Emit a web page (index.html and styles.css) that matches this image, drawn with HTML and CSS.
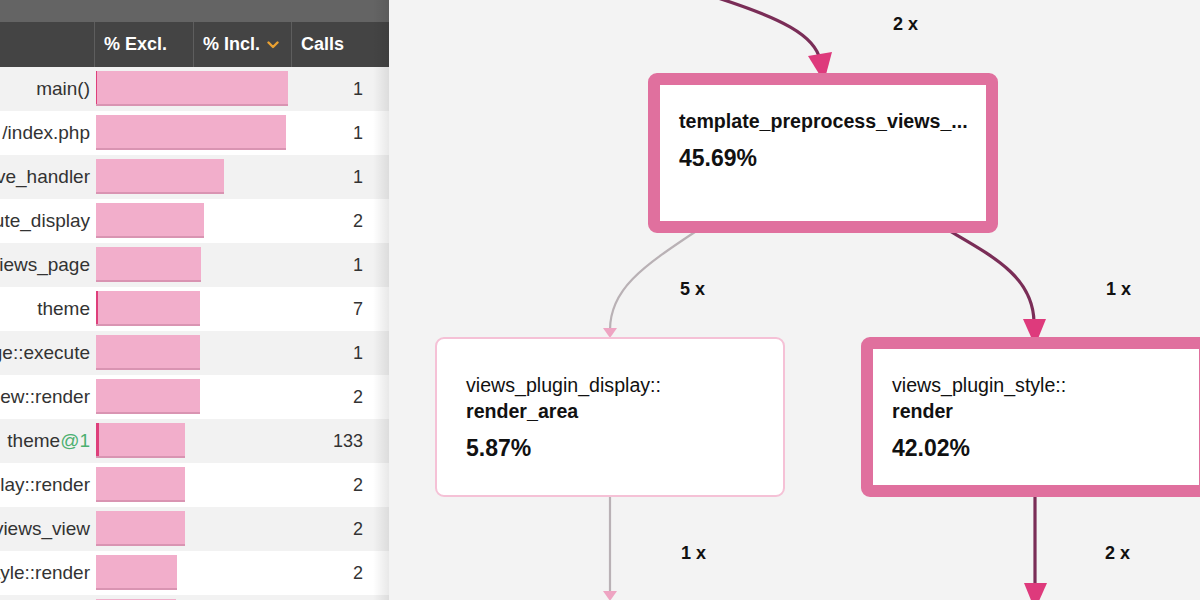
FILE: index.html
```html
<!DOCTYPE html>
<html>
<head>
<meta charset="utf-8">
<link rel="stylesheet" href="styles.css">
</head>
<body>
<div class="app">
  <aside class="panel">
    <div class="topbar"></div>
    <div class="thead">
      <div class="th th-name"></div>
      <div class="th">% Excl.</div>
      <div class="th">% Incl.
        <svg class="chev" width="12" height="8" viewBox="0 0 12 8"><polyline points="1.5,1.5 6,6 10.5,1.5" fill="none" stroke="#e9a132" stroke-width="2.4" stroke-linecap="round" stroke-linejoin="round"/></svg>
      </div>
      <div class="th">Calls</div>
    </div>
    <div class="rows">
      <div class="row"><div class="name"><span>main()</span></div><div class="barcell"><div class="bar" style="width:192px"><div class="excl" style="width:1px"></div></div></div><div class="calls">1</div></div>
      <div class="row"><div class="name"><span>/index.php</span></div><div class="barcell"><div class="bar" style="width:190px"></div></div><div class="calls">1</div></div>
      <div class="row"><div class="name"><span>menu_execute_active_handler</span></div><div class="barcell"><div class="bar" style="width:128px"></div></div><div class="calls">1</div></div>
      <div class="row"><div class="name"><span>views_plugin_display_page::execute_display</span></div><div class="barcell"><div class="bar" style="width:108px"></div></div><div class="calls">2</div></div>
      <div class="row"><div class="name"><span>views_page</span></div><div class="barcell"><div class="bar" style="width:105px"></div></div><div class="calls">1</div></div>
      <div class="row"><div class="name"><span>theme</span></div><div class="barcell"><div class="bar" style="width:104px"><div class="excl" style="width:1.5px"></div></div></div><div class="calls">7</div></div>
      <div class="row"><div class="name"><span>views_plugin_display_page::execute</span></div><div class="barcell"><div class="bar" style="width:104px"></div></div><div class="calls">1</div></div>
      <div class="row"><div class="name"><span>views_view::render</span></div><div class="barcell"><div class="bar" style="width:104px"></div></div><div class="calls">2</div></div>
      <div class="row"><div class="name"><span>theme<em class="rec">@1</em></span></div><div class="barcell"><div class="bar" style="width:89px"><div class="excl" style="width:3px"></div></div></div><div class="calls">133</div></div>
      <div class="row"><div class="name"><span>views_plugin_display::render</span></div><div class="barcell"><div class="bar" style="width:89px"></div></div><div class="calls">2</div></div>
      <div class="row"><div class="name"><span>template_preprocess_views_view</span></div><div class="barcell"><div class="bar" style="width:89px"></div></div><div class="calls">2</div></div>
      <div class="row"><div class="name"><span>views_plugin_style::render</span></div><div class="barcell"><div class="bar" style="width:81px"></div></div><div class="calls">2</div></div>
      <div class="row"><div class="name"><span>views_plugin_style_default::render</span></div><div class="barcell"><div class="bar" style="width:80px"></div></div><div class="calls">2</div></div>
    </div>
  </aside>

  <main class="graph">
    <svg class="edges" width="811" height="600" viewBox="389 0 811 600">
      <path d="M 718 -2 C 780 18, 815 35, 820 60" fill="none" stroke="#7a2d57" stroke-width="3.2"/>
      <polygon points="808,56 832,52 824,82" fill="#de3a7c"/>

      <path d="M 701 228 C 640 268, 610 290, 610 330" fill="none" stroke="#b9b1b5" stroke-width="2.2"/>
      <polygon points="603,328 617,328 610,338" fill="#eea4c2"/>

      <path d="M 943 227 C 990 255, 1033 275, 1034 322" fill="none" stroke="#7a2d57" stroke-width="3.2"/>
      <polygon points="1023,319 1046,319 1035,346" fill="#de3a7c"/>

      <path d="M 610 497 L 610 594" fill="none" stroke="#b9b1b5" stroke-width="2.2"/>
      <polygon points="603,591 617,591 610,601" fill="#eea4c2"/>

      <path d="M 1035 497 L 1035 588" fill="none" stroke="#7a2d57" stroke-width="3.2"/>
      <polygon points="1024,583 1047,583 1035,610" fill="#de3a7c"/>

      <text class="lbl" x="893" y="30">2 x</text>
      <text class="lbl" x="680" y="295">5 x</text>
      <text class="lbl" x="1106" y="295">1 x</text>
      <text class="lbl" x="681" y="559">1 x</text>
      <text class="lbl" x="1105" y="559">2 x</text>
    </svg>

    <div class="node hot n1">
      <div class="fn"><b>template_preprocess_views_...</b></div>
      <div class="pct">45.69%</div>
    </div>
    <div class="node cold n2">
      <div class="fn">views_plugin_display::<br><b>render_area</b></div>
      <div class="pct">5.87%</div>
    </div>
    <div class="node hot n3">
      <div class="fn">views_plugin_style::<br><b>render</b></div>
      <div class="pct">42.02%</div>
    </div>
  </main>
</div>
</body>
</html>
```

FILE: styles.css
```css
* { box-sizing: border-box; }
html, body { margin: 0; padding: 0; }
body {
  width: 1200px;
  height: 600px;
  overflow: hidden;
  font-family: "Liberation Sans", Arial, Helvetica, sans-serif;
  background: #f3f3f3;
}
.app {
  display: flex;
  width: 1200px;
  height: 600px;
}
.panel {
  position: relative;
  width: 389px;
  flex: none;
  display: flex;
  flex-direction: column;
  background: #f2f2f2;
  overflow: hidden;
}
.panel::after {
  content: "";
  position: absolute;
  top: 0;
  right: 0;
  bottom: 0;
  width: 16px;
  background: linear-gradient(to right, rgba(0,0,0,0), rgba(0,0,0,0.09));
  pointer-events: none;
}
.topbar {
  height: 22px;
  background: #646464;
  flex: none;
}
.thead {
  height: 45px;
  flex: none;
  display: grid;
  grid-template-columns: 94px 99px 98px 98px;
  background: #444444;
}
.th {
  display: flex;
  align-items: center;
  gap: 7px;
  padding-left: 9px;
  color: #ffffff;
  font-weight: bold;
  font-size: 18px;
  border-left: 1px solid #5e5e5e;
}
.th-name { border-left: none; }
.chev { display: block; margin-top: 1px; }

.rows { display: flex; flex-direction: column; }
.row {
  height: 44px;
  flex: none;
  display: grid;
  grid-template-columns: 94px 197px 98px;
  background: #f2f2f2;
  color: #333;
  font-size: 19px;
}
.row:nth-child(even) { background: #ffffff; }
.name {
  display: flex;
  justify-content: flex-end;
  align-items: center;
  overflow: hidden;
  white-space: nowrap;
  padding-right: 4px;
}
.name span { flex: none; }
.rec { font-style: normal; color: #4cb070; }
.barcell {
  padding: 4px 0 0 2px;
}
.bar {
  height: 35px;
  background: #f2aecb;
  border-bottom: 2px solid #d994b2;
  display: flex;
}
.excl {
  height: 100%;
  background: #de3f7b;
}
.calls {
  display: flex;
  align-items: center;
  justify-content: flex-end;
  padding-right: 26px;
  font-size: 18px;
}

.graph {
  position: relative;
  flex: 1;
  background: #f3f3f3;
  overflow: hidden;
}
.edges {
  position: absolute;
  left: 0;
  top: 0;
}
.lbl {
  font-family: "Liberation Sans", Arial, sans-serif;
  font-weight: bold;
  font-size: 18px;
  fill: #111;
}
.node {
  position: absolute;
  width: 350px;
  height: 160px;
  background: #fff;
  border-radius: 9px;
  color: #111;
  font-size: 19.6px;
}
.node.hot {
  border: 12px solid #e0709e;
  padding: 23px 0 0 19px;
}
.node.cold {
  border: 2px solid #f5c1d6;
  padding: 33px 0 0 29px;
}
.fn { line-height: 26px; white-space: nowrap; }
.pct {
  margin-top: 11px;
  line-height: 26px;
  font-weight: bold;
  font-size: 23px;
}
.n1 { left: 259px; top: 73px; }
.n2 { left: 46px; top: 337px; }
.n3 { left: 472px; top: 337px; }
```
